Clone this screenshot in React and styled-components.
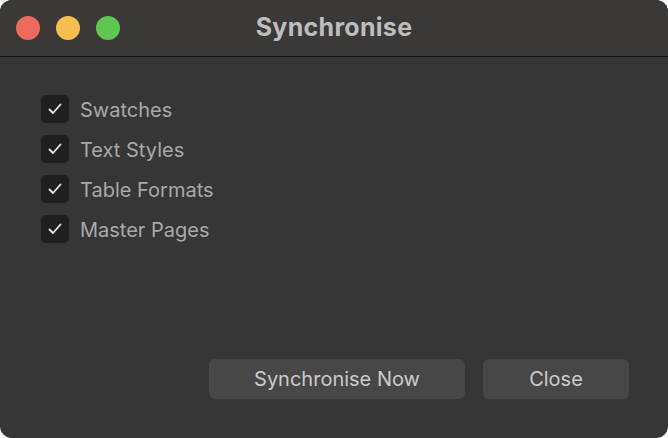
import React from 'react'
import styled, { createGlobalStyle } from 'styled-components'

const Global = createGlobalStyle`
  html, body { margin: 0; padding: 0; background: #ffffff; }
  body { font-family: Inter, "Noto Sans", sans-serif; }
`

const Window = styled.div`
  width: 668px;
  height: 438px;
  box-sizing: border-box;
  border-radius: 12px;
  overflow: hidden;
  background: #363636;
  display: flex;
  flex-direction: column;
`

const TitleBar = styled.div`
  position: relative;
  height: 56px;
  flex: none;
  background: #3a3938;
  border-bottom: 1px solid #111;
  display: flex;
  align-items: center;
  justify-content: center;
`

const Lights = styled.div`
  position: absolute;
  left: 16px;
  top: 16px;
  display: flex;
  gap: 16px;
`

const Light = styled.span`
  width: 24px;
  height: 24px;
  border-radius: 50%;
  background: ${p => p.$c};
`

const Title = styled.div`
  font-size: 25px;
  font-weight: 700;
  color: #bdbdbd;
  letter-spacing: 0.3px;
  padding-bottom: 2px;
`

const Body = styled.div`
  flex: 1;
  display: flex;
  flex-direction: column;
  justify-content: space-between;
  padding: 38px 39px 39px 41px;
`

const List = styled.div`
  display: flex;
  flex-direction: column;
  gap: 12px;
`

const Row = styled.label`
  display: flex;
  align-items: center;
  gap: 11px;
  height: 28px;
`

const Box = styled.span`
  width: 28px;
  height: 28px;
  border-radius: 5px;
  background: #1f1f1f;
  display: flex;
  align-items: center;
  justify-content: center;
`

const Label = styled.span`
  font-size: 20px;
  color: #a9a9a9;
  padding-top: 2px;
`

const Actions = styled.div`
  display: flex;
  justify-content: flex-end;
  gap: 18px;
`

const Button = styled.button`
  width: ${p => p.$w}px;
  height: 40px;
  border: none;
  border-radius: 6px;
  background: #474747;
  color: #cbcbcb;
  font-family: Inter, "Noto Sans", sans-serif;
  font-size: 20px;
  padding: 0;
`

const Check = () => (
  <svg width="14" height="12" viewBox="0 0 14 12">
    <path d="M1.5 6.5 L5 10 L12.5 1.5" fill="none" stroke="#e6e6e6" strokeWidth="1.8" strokeLinecap="round" strokeLinejoin="round" />
  </svg>
)

const items = ['Swatches', 'Text Styles', 'Table Formats', 'Master Pages']

export default function App() {
  return (
    <>
      <Global />
      <Window>
        <TitleBar>
          <Lights>
            <Light $c="#ed6a5e" />
            <Light $c="#f5bf4f" />
            <Light $c="#61c554" />
          </Lights>
          <Title>Synchronise</Title>
        </TitleBar>
        <Body>
          <List>
            {items.map(t => (
              <Row key={t}>
                <Box><Check /></Box>
                <Label>{t}</Label>
              </Row>
            ))}
          </List>
          <Actions>
            <Button $w={256}>Synchronise Now</Button>
            <Button $w={146}>Close</Button>
          </Actions>
        </Body>
      </Window>
    </>
  )
}
